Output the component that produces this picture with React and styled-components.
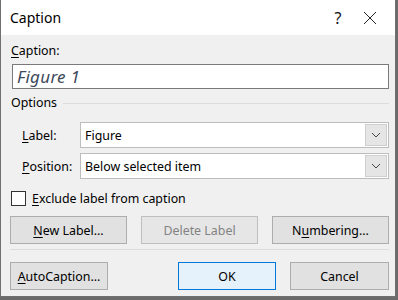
import React from 'react';
import styled, { createGlobalStyle } from 'styled-components';

const GlobalStyle = createGlobalStyle`
  html, body { margin: 0; padding: 0; background: #6b6b6b; }
  body { font-family: "Noto Sans", "Open Sans", sans-serif; font-size: 12.4px; color: #000; }
`;

const Win = styled.div`
  width: 396px;
  height: 297px;
  background: #f0f0f0;
  border: 1px solid #707070;
  border-top: none;
  display: flex;
  flex-direction: column;
  box-sizing: border-box;
`;

const TitleBar = styled.div`
  height: 35px;
  background: #fff;
  display: flex;
  align-items: center;
  padding-left: 9px;
  font-size: 14px;
  color: #000;
`;

const Title = styled.div`
  flex: 1;
`;

const TitleBtn = styled.div`
  width: 32px;
  display: flex;
  justify-content: center;
  align-items: center;
  font-size: 16px;
  color: #111;
  margin-right: ${p => p.$mr || 0}px;
`;

const Body = styled.div`
  padding: 8px 6px 0 10px;
  display: flex;
  flex-direction: column;
`;

const U = styled.span`
  text-decoration: underline;
  text-underline-offset: 2px;
`;

const Label = styled.div`
  line-height: 16px;
  height: 16px;
`;

const CaptionInput = styled.div`
  margin: 5px 0 0 1px;
  height: 25px;
  border: 1px solid #7a7a7a;
  background: #fff;
  box-sizing: border-box;
  display: flex;
  align-items: center;
  padding-left: 4px;
  font-style: italic;
  font-size: 17px;
  color: #3e4a5c;
  letter-spacing: 0.3px;
`;

const GroupHead = styled.div`
  margin-top: 5px;
  display: flex;
  align-items: center;
  gap: 6px;
  height: 16px;
  &::after {
    content: '';
    flex: 1;
    height: 1px;
    background: #dcdcdc;
    margin-top: 2px;
  }
`;

const Grid = styled.div`
  margin-top: 12px;
  display: grid;
  grid-template-columns: 58px 1fr;
  row-gap: 5px;
  padding-left: 11px;
`;

const RowLabel = styled.div`
  display: flex;
  align-items: center;
`;

const Combo = styled.div`
  height: 26px;
  border: 1px solid #bdbdbd;
  background: #fff;
  display: flex;
  align-items: stretch;
  box-sizing: border-box;
`;

const ComboText = styled.div`
  flex: 1;
  display: flex;
  align-items: center;
  padding-left: 4px;
`;

const ComboBtn = styled.div`
  width: 20px;
  margin: 1px 1px 1px 0;
  background: #e5e5e5;
  border: 1px solid #cfcfcf;
  display: flex;
  align-items: center;
  justify-content: center;
`;

const CheckRow = styled.div`
  margin-top: 11px;
  display: flex;
  align-items: center;
  gap: 6px;
  height: 16px;
`;

const Box = styled.div`
  width: 13px;
  height: 13px;
  border: 1px solid #333;
  background: #fff;
`;

const BtnRow = styled.div`
  display: grid;
  grid-template-columns: ${p => p.$cols};
  column-gap: ${p => p.$gap}px;
  margin-top: ${p => p.$mt}px;
  margin-left: -1px;
`;

const Button = styled.div`
  height: 28px;
  box-sizing: border-box;
  border: 1px solid ${p => (p.$disabled ? '#bfbfbf' : p.$primary ? '#0078d7' : '#adadad')};
  background: ${p => (p.$disabled ? '#e6e6e6' : p.$primary ? '#e5f1fb' : '#e1e1e1')};
  color: ${p => (p.$disabled ? '#838383' : '#000')};
  display: flex;
  align-items: center;
  justify-content: center;
`;

const Sep = styled.div`
  height: 1px;
  background: #dcdcdc;
  margin: 5px 0 0 -1px;
`;

const Chevron = () => (
  <svg width="10" height="6" viewBox="0 0 10 6">
    <path d="M1 1 L5 5 L9 1" fill="none" stroke="#444" strokeWidth="1" />
  </svg>
);

const Close = () => (
  <svg width="14" height="14" viewBox="0 0 14 14">
    <path d="M1 1 L13 13 M13 1 L1 13" stroke="#222" strokeWidth="1" />
  </svg>
);

export default function App() {
  return (
    <>
      <GlobalStyle />
      <Win>
        <TitleBar>
          <Title>Caption</Title>
          <TitleBtn $mr={0}>?</TitleBtn>
          <TitleBtn $mr={9}><Close /></TitleBtn>
        </TitleBar>
        <Body>
          <Label><U>C</U>aption:</Label>
          <CaptionInput>Figure 1</CaptionInput>
          <GroupHead>Options</GroupHead>
          <Grid>
            <RowLabel><U>L</U>abel:</RowLabel>
            <Combo>
              <ComboText>Figure</ComboText>
              <ComboBtn><Chevron /></ComboBtn>
            </Combo>
            <RowLabel><U>P</U>osition:</RowLabel>
            <Combo>
              <ComboText>Below selected item</ComboText>
              <ComboBtn><Chevron /></ComboBtn>
            </Combo>
          </Grid>
          <CheckRow>
            <Box />
            <span><U>E</U>xclude label from caption</span>
          </CheckRow>
          <BtnRow $cols="117px 117px 117px" $gap={14} $mt={10}>
            <Button><span><U>N</U>ew Label...</span></Button>
            <Button $disabled>Delete Label</Button>
            <Button><span>N<U>u</U>mbering...</span></Button>
          </BtnRow>
          <Sep />
          <BtnRow $cols="98px 70px 98px 14px 99px" $gap={0} $mt={12}>
            <Button><span><U>A</U>utoCaption...</span></Button>
            <div />
            <Button $primary>OK</Button>
            <div />
            <Button>Cancel</Button>
          </BtnRow>
        </Body>
      </Win>
    </>
  );
}
